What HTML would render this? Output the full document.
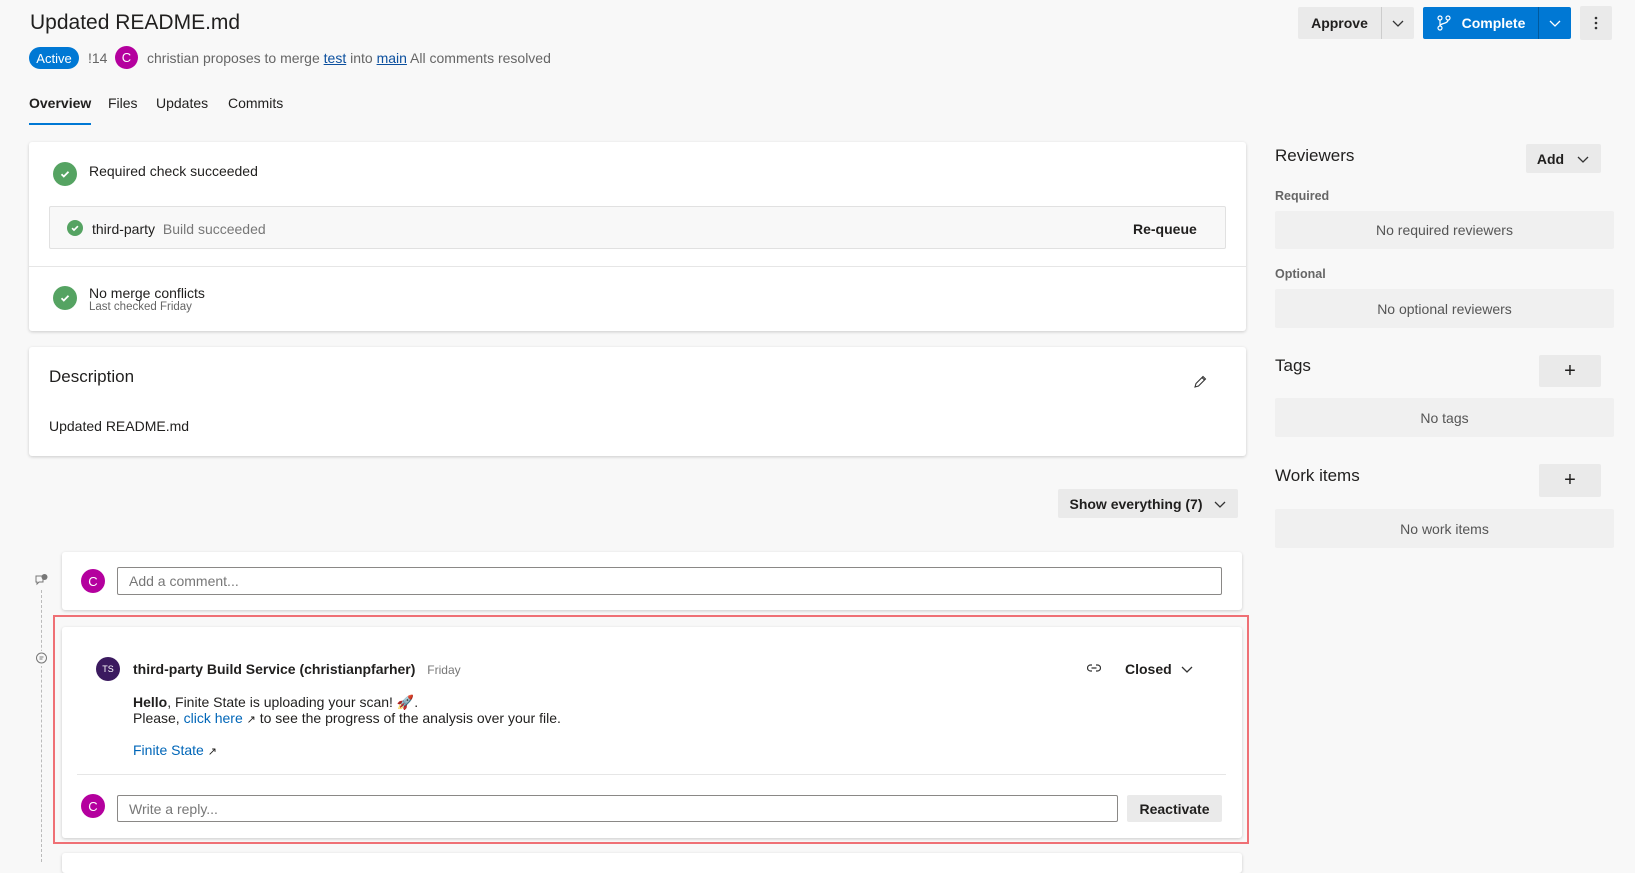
<!DOCTYPE html>
<html><head><meta charset="utf-8"><style>
*{box-sizing:border-box;margin:0;padding:0}
body{width:1635px;height:862px;overflow:hidden;background:#f8f8f8;font-family:"Liberation Sans",sans-serif;font-size:14px;color:#201f1e;position:relative}
.a{position:absolute}
.card{position:absolute;background:#fff;border-radius:3px;box-shadow:0 1px 3px rgba(0,0,0,.18)}
.btn{position:absolute;background:#eaeaea;border-radius:2px;font-weight:bold;display:flex;align-items:center;justify-content:center}
.chk{position:absolute;border-radius:50%;background:#55a362;display:flex;align-items:center;justify-content:center}
.av{position:absolute;border-radius:50%;background:#b4009e;color:#fff;display:flex;align-items:center;justify-content:center;font-size:13px}
.box{position:absolute;background:#f0f0f0;color:#555;display:flex;align-items:center;justify-content:center;border-radius:2px}
.lbl{position:absolute;font-size:12.5px;font-weight:bold;color:#666}
.h{position:absolute;font-size:17px}
.inp{position:absolute;border:1px solid #8a8886;border-radius:2px;color:#777;padding-left:11px;display:flex;align-items:center;background:#fff}
a{color:#0066b8}
</style></head><body>
<div class="a" style="left:30px;top:11px;font-size:21px">Updated README.md</div>
<div class="a" style="left:29px;top:47px;width:50px;height:22px;border-radius:11px;background:#0078d4;color:#fff;font-size:13px;display:flex;align-items:center;justify-content:center">Active</div>
<div class="a" style="left:88px;top:50px;color:#666">!14</div>
<div class="av" style="left:115px;top:46px;width:23px;height:23px">C</div>
<div class="a" style="left:147px;top:50px;color:#666">christian proposes to merge <a style="color:#0b4f9e" href="#">test</a> into <a style="color:#0b4f9e" href="#">main</a> All comments resolved</div>
<div class="a" style="left:29px;top:95px;font-weight:bold">Overview</div>
<div class="a" style="left:108px;top:95px">Files</div>
<div class="a" style="left:156px;top:95px">Updates</div>
<div class="a" style="left:228px;top:95px">Commits</div>
<div class="a" style="left:29px;top:123px;width:62px;height:2px;background:#0078d4"></div>

<div class="btn" style="left:1298px;top:7px;width:84px;height:32px;border-right:1px solid #ccc;border-radius:2px 0 0 2px">Approve</div>
<div class="btn" style="left:1382px;top:7px;width:32px;height:32px;border-radius:0 2px 2px 0"><svg width="14" height="14" viewBox="0 0 14 14"><path d="M2 5l5 5 5-5" fill="none" stroke="#333" stroke-width="1.3"/></svg></div>
<div class="btn" style="left:1423px;top:7px;width:116px;height:32px;background:#0078d4;color:#fff;border-radius:2px 0 0 2px;border-right:1px solid #005a9e"><svg width="16" height="16" viewBox="0 0 16 16" style="margin-right:10px"><g fill="none" stroke="#fff" stroke-width="1.2"><circle cx="4" cy="3" r="2"/><circle cx="12" cy="3" r="2"/><circle cx="4" cy="13" r="2"/><path d="M4 5v6M12 5c0 4-8 3-8 6"/></g></svg>Complete</div>
<div class="btn" style="left:1539px;top:7px;width:32px;height:32px;background:#0078d4;border-radius:0 2px 2px 0"><svg width="14" height="14" viewBox="0 0 14 14"><path d="M2 5l5 5 5-5" fill="none" stroke="#fff" stroke-width="1.3"/></svg></div>
<div class="btn" style="left:1580px;top:6px;width:32px;height:34px"><svg width="4" height="14"><circle cx="2" cy="2" r="1.3" fill="#333"/><circle cx="2" cy="7" r="1.3" fill="#333"/><circle cx="2" cy="12" r="1.3" fill="#333"/></svg></div>

<div class="card" style="left:29px;top:142px;width:1217px;height:189px">
 <div class="chk" style="left:24px;top:20px;width:24px;height:24px"><svg width="12" height="12" viewBox="0 0 12 12"><path d="M2.5 6.2l2.3 2.3 4.7-4.7" fill="none" stroke="#fff" stroke-width="1.8"/></svg></div>
 <div class="a" style="left:60px;top:21px">Required check succeeded</div>
 <div class="a" style="left:20px;top:64px;width:1177px;height:43px;border:1px solid #e1e1e1;background:#f8f8f8;border-radius:2px">
  <div class="chk" style="left:17px;top:13px;width:16px;height:16px"><svg width="10" height="10" viewBox="0 0 12 12"><path d="M2.5 6.2l2.3 2.3 4.7-4.7" fill="none" stroke="#fff" stroke-width="2"/></svg></div>
  <div class="a" style="left:42px;top:14px">third-party <span style="color:#777;margin-left:4px">Build succeeded</span></div>
  <div class="a" style="left:1083px;top:14px;font-weight:bold">Re-queue</div>
 </div>
 <div class="a" style="left:0;top:124px;width:1217px;height:1px;background:#e6e6e6"></div>
 <div class="chk" style="left:24px;top:144px;width:24px;height:24px"><svg width="12" height="12" viewBox="0 0 12 12"><path d="M2.5 6.2l2.3 2.3 4.7-4.7" fill="none" stroke="#fff" stroke-width="1.8"/></svg></div>
 <div class="a" style="left:60px;top:143px">No merge conflicts</div>
 <div class="a" style="left:60px;top:159px;font-size:11.5px;color:#666">Last checked Friday</div>
</div>

<div class="card" style="left:29px;top:347px;width:1217px;height:109px">
 <div class="a" style="left:20px;top:20px;font-size:17px">Description</div>
 <svg class="a" style="left:1164px;top:28px" width="14" height="14" viewBox="0 0 14 14"><path d="M2 12l1-3.5 7-7 2.5 2.5-7 7z M9 2.5l2.5 2.5" fill="none" stroke="#333" stroke-width="1.1"/></svg>
 <div class="a" style="left:20px;top:71px">Updated README.md</div>
</div>

<div class="btn" style="left:1058px;top:489px;width:180px;height:29px">Show everything (7)<svg width="14" height="14" viewBox="0 0 14 14" style="margin-left:10px"><path d="M2 5l5 5 5-5" fill="none" stroke="#333" stroke-width="1.3"/></svg></div>

<div class="a" style="left:41px;top:590px;height:272px;border-left:1px dashed #bbb"></div>
<div class="a" style="left:34px;top:573px;width:15px;height:15px;background:#f8f8f8"><svg width="15" height="15" viewBox="0 0 15 15"><path d="M2 3h7v6H5l-2 2V9H2z" fill="none" stroke="#777"/><circle cx="10.5" cy="4" r="3" fill="#777"/></svg></div>
<div class="a" style="left:34px;top:651px;width:15px;height:15px;background:#f8f8f8"><svg width="15" height="15" viewBox="0 0 15 15"><circle cx="7.5" cy="7" r="5" fill="none" stroke="#777"/><path d="M5.5 6h4M5.5 8h3" stroke="#777"/></svg></div>

<div class="card" style="left:62px;top:552px;width:1180px;height:58px">
 <div class="av" style="left:19px;top:17px;width:24px;height:24px">C</div>
 <div class="inp" style="left:55px;top:15px;width:1105px;height:28px">Add a comment...</div>
</div>

<div class="a" style="left:53px;top:615px;width:1196px;height:229px;border:2px solid #ef7075"></div>
<div class="card" style="left:62px;top:627px;width:1180px;height:211px">
 <div class="av" style="left:34px;top:30px;width:24px;height:24px;background:#3b1a5f;font-size:9px">TS</div>
 <div class="a" style="left:71px;top:34px;font-weight:bold">third-party Build Service (christianpfarher) <span style="font-weight:normal;color:#777;font-size:12px;margin-left:8px">Friday</span></div>
 <svg class="a" style="left:1025px;top:35px" width="14" height="12" viewBox="0 0 14 12"><path d="M5 3H3.5a3 3 0 000 6H5M9 3h1.5a3 3 0 010 6H9M4.5 6h5" fill="none" stroke="#333" stroke-width="1.2"/></svg>
 <div class="a" style="left:1063px;top:34px;font-weight:bold">Closed</div>
 <svg class="a" style="left:1118px;top:35px" width="14" height="14" viewBox="0 0 14 14"><path d="M2 5l5 5 5-5" fill="none" stroke="#333" stroke-width="1.3"/></svg>
 <div class="a" style="left:71px;top:67px;line-height:16px"><b>Hello</b>, Finite State is uploading your scan! 🚀.<br>Please, <a href="#" style="text-decoration:none">click here</a> <span style="font-size:11px">↗</span> to see the progress of the analysis over your file.</div>
 <div class="a" style="left:71px;top:115px"><a href="#" style="text-decoration:none">Finite State</a> <span style="font-size:11px">↗</span></div>
 <div class="a" style="left:15px;top:147px;width:1149px;height:1px;background:#e6e6e6"></div>
 <div class="av" style="left:19px;top:167px;width:24px;height:24px">C</div>
 <div class="inp" style="left:55px;top:168px;width:1001px;height:27px">Write a reply...</div>
 <div class="btn" style="left:1065px;top:168px;width:95px;height:27px">Reactivate</div>
</div>
<div class="card" style="left:62px;top:853px;width:1180px;height:20px"></div>

<div class="h" style="left:1275px;top:146px">Reviewers</div>
<div class="btn" style="left:1526px;top:144px;width:75px;height:29px">Add<svg width="14" height="14" viewBox="0 0 14 14" style="margin-left:12px"><path d="M2 5l5 5 5-5" fill="none" stroke="#333" stroke-width="1.3"/></svg></div>
<div class="lbl" style="left:1275px;top:189px">Required</div>
<div class="box" style="left:1275px;top:211px;width:339px;height:38px">No required reviewers</div>
<div class="lbl" style="left:1275px;top:267px">Optional</div>
<div class="box" style="left:1275px;top:289px;width:339px;height:39px">No optional reviewers</div>
<div class="h" style="left:1275px;top:356px">Tags</div>
<div class="btn" style="left:1539px;top:355px;width:62px;height:32px;font-weight:normal;font-size:20px">+</div>
<div class="box" style="left:1275px;top:398px;width:339px;height:39px">No tags</div>
<div class="h" style="left:1275px;top:466px">Work items</div>
<div class="btn" style="left:1539px;top:464px;width:62px;height:33px;font-weight:normal;font-size:20px">+</div>
<div class="box" style="left:1275px;top:509px;width:339px;height:39px">No work items</div>
</body></html>
